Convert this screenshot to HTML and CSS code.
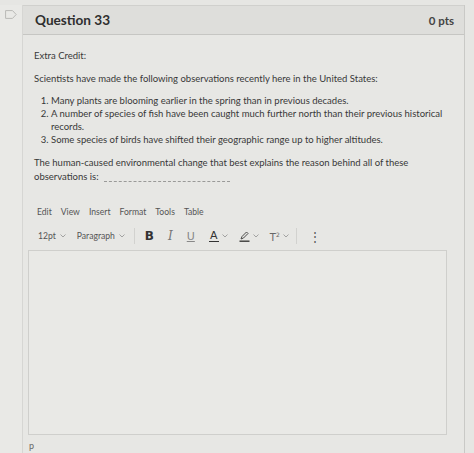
FILE: index.html
```html
<!DOCTYPE html>
<html>
<head>
<meta charset="utf-8">
<link rel="stylesheet" href="styles.css">
</head>
<body>
<div class="page">
  <div class="gutter">
    <svg class="flag" width="12" height="9" viewBox="0 0 12 9"><path d="M0.6 0.6 H7.5 L11.2 4.5 L7.5 8.4 H0.6 Z" fill="none" stroke="#b9b9b6" stroke-width="1"/></svg>
  </div>
  <div class="card">
    <div class="header">
      <span class="title">Question 33</span>
      <span class="pts">0 pts</span>
    </div>
    <div class="body">
      <p class="p1">Extra Credit:</p>
      <p class="p2">Scientists have made the following observations recently here in the United States:</p>
      <ol class="list">
        <li>Many plants are blooming earlier in the spring than in previous decades.</li>
        <li>A number of species of fish have been caught much further north than their previous historical records.</li>
        <li>Some species of birds have shifted their geographic range up to higher altitudes.</li>
      </ol>
      <p class="p3">The human-caused environmental change that best explains the reason behind all of these observations is: <span class="blank"></span></p>

      <div class="menu">
        <span>Edit</span><span>View</span><span>Insert</span><span>Format</span><span>Tools</span><span>Table</span>
      </div>
      <div class="tools">
        <span class="drop">12pt <svg class="chev" width="6" height="4" viewBox="0 0 6 4"><path d="M0.5 0.5 L3 3 L5.5 0.5" fill="none" stroke="#9a9a98" stroke-width="0.9"/></svg></span>
        <span class="drop para">Paragraph <svg class="chev" width="6" height="4" viewBox="0 0 6 4"><path d="M0.5 0.5 L3 3 L5.5 0.5" fill="none" stroke="#9a9a98" stroke-width="0.9"/></svg></span>
        <span class="sep"></span>
        <span class="btn b">B</span>
        <span class="btn i">I</span>
        <span class="btn u">U</span>
        <span class="btn a">A<span class="bar"></span></span>
        <svg class="chev c2" width="6" height="4" viewBox="0 0 6 4"><path d="M0.5 0.5 L3 3 L5.5 0.5" fill="none" stroke="#9a9a98" stroke-width="0.9"/></svg>
        <svg class="hl" width="11" height="11" viewBox="0 0 11 11"><path d="M2 8 L3 5.5 L7.5 1 L9 2.5 L4.5 7 Z" fill="none" stroke="#4a4a48" stroke-width="1"/><path d="M0.5 10.2 H10.5" stroke="#3a3a38" stroke-width="1.4"/></svg>
        <svg class="chev c2" width="6" height="4" viewBox="0 0 6 4"><path d="M0.5 0.5 L3 3 L5.5 0.5" fill="none" stroke="#9a9a98" stroke-width="0.9"/></svg>
        <span class="btn sup">T<sup>2</sup></span>
        <svg class="chev" width="6" height="4" viewBox="0 0 6 4"><path d="M0.5 0.5 L3 3 L5.5 0.5" fill="none" stroke="#9a9a98" stroke-width="0.9"/></svg>
        <span class="sep s2"></span>
        <span class="more">⋮</span>
      </div>
      <div class="editor"></div>
      <div class="status"><span class="pp">p</span></div>
    </div>
  </div>
</div>
</body>
</html>
```
FILE: styles.css
```css
html, body {
  margin: 0;
  padding: 0;
}
body {
  background: #e6e6e3;
  font-family: Lato, "Noto Sans", sans-serif;
  color: #383838;
  width: 474px;
  height: 453px;
  overflow: hidden;
}
.page {
  display: flex;
  padding-top: 5px;
}
.gutter {
  width: 22px;
  flex: none;
  background: #e9e9e6;
}
.flag {
  display: block;
  margin: 5px 0 0 5px;
}
.card {
  width: 441px;
  border-right: 1px solid #c9c9c6;
  border-left: 1px solid #d6d6d3;
  background: #e7e7e4;
  height: 460px;
}
.header {
  height: 28px;
  background: #dededb;
  border-top: 1px solid #d0d0cd;
  border-bottom: 1px solid #c6c6c3;
  display: flex;
  align-items: center;
  justify-content: space-between;
  padding: 0 10px 0 12px;
}
.title {
  font-weight: 700;
  font-size: 13.6px;
  color: #2f2f2f;
}
.pts {
  font-weight: 700;
  font-size: 11.5px;
  color: #444;
}
.body {
  padding: 14px 16px 0 11px;
  font-size: 9.5px;
  line-height: 13px;
}
.body p {
  margin: 0;
}
.p1 {
  margin-bottom: 10px !important;
}
.p2 {
  margin-bottom: 9px !important;
}
.list {
  margin: 0 0 10px 0;
  padding-left: 17px;
}
.p3 {
  line-height: 14px;
}
.blank {
  display: inline-block;
  width: 126px;
  border-bottom: 1px dashed #9a9a98;
  margin-left: 3px;
  vertical-align: -2px;
}
.menu {
  margin-top: 22px;
  display: flex;
  gap: 9px;
  padding-left: 3px;
  font-size: 8.6px;
  color: #555;
}
.tools {
  display: flex;
  align-items: center;
  margin-top: 9px;
  padding-left: 4px;
  height: 16px;
  font-size: 8.6px;
  color: #555;
}
.drop {
  display: flex;
  align-items: center;
  gap: 4px;
}
.chev {
  display: block;
}
.para {
  margin-left: 11px;
}
.sep {
  width: 1px;
  height: 16px;
  background: #d2d2cf;
  margin: 0 10px 0 9px;
}
.btn {
  color: #333;
}
.b {
  font-family: "DejaVu Sans", sans-serif;
  font-weight: 700;
  font-size: 12px;
  margin-right: 14px;
}
.i {
  font-family: "DejaVu Serif", serif;
  font-style: italic;
  font-size: 12px;
  color: #777;
  margin-right: 14px;
}
.u {
  font-family: "DejaVu Sans", sans-serif;
  font-size: 11px;
  color: #888;
  text-decoration: underline;
  margin-right: 14px;
}
.a {
  font-family: "DejaVu Sans", sans-serif;
  font-size: 11px;
  display: inline-flex;
  flex-direction: column;
  align-items: center;
  line-height: 11px;
  margin-right: 3px;
}
.bar {
  display: block;
  width: 10px;
  height: 1.5px;
  background: #333;
}
.c2 {
  margin-right: 11px;
}
.hl {
  display: block;
  margin-right: 3px;
}
.sup {
  font-family: "DejaVu Sans", sans-serif;
  font-size: 10px;
  color: #666;
  margin-right: 3px;
}
.sup sup {
  font-size: 6px;
}
.s2 {
  margin: 0 12px 0 7px;
}
.more {
  font-size: 12px;
  color: #555;
}
.editor {
  margin: 6px 0 0 -6px;
  width: 417px;
  height: 183px;
  border: 1px solid #cfcfcc;
  background: #e9e9e6;
}
.status {
  margin: 6px 0 0 -5px;
  font-size: 9px;
  line-height: 10px;
  color: #666;
}
```
